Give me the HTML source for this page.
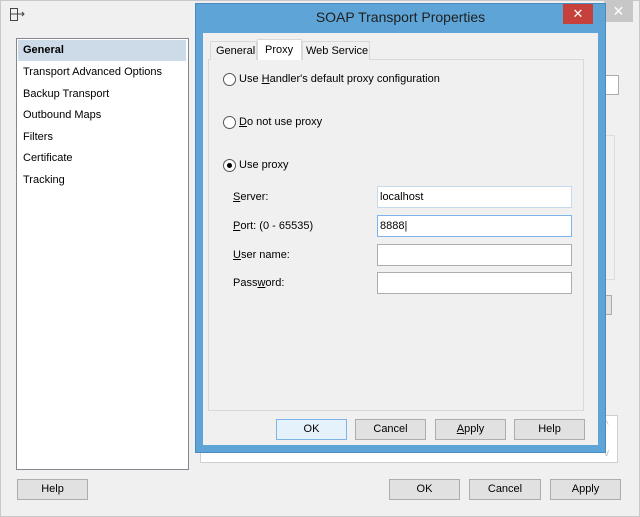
<!DOCTYPE html><html><head><style>
*{box-sizing:border-box;margin:0;padding:0}
body{width:640px;height:517px;background:#f0f0f0;font-family:"Liberation Sans",sans-serif;font-size:11px;color:#000;position:relative;overflow:hidden;white-space:nowrap}
.a{position:absolute}
.btn{position:absolute;height:21px;border:1px solid #adadad;background:#e1e1e1;text-align:center;line-height:19px;font-size:11px}
.inp{position:absolute;left:377px;width:195px;height:22px;border:1px solid #abadb3;background:#fff;padding-left:2px;line-height:20px}
.lbl{position:absolute;left:233px}
.rad{position:absolute;left:223px;width:13px;height:13px;border:1px solid #555;border-radius:50%;background:#fff}
u{text-decoration:underline}
</style></head><body>
<div class="a" style="left:0;top:0;width:640px;height:517px;border:1px solid #c8c8c8"></div>
<svg class="a" style="left:9px;top:7px" width="18" height="16"><rect x="1.5" y="1.5" width="7" height="12" fill="none" stroke="#444"/><line x1="1.5" y1="7" x2="8.5" y2="7" stroke="#444"/><line x1="9" y1="7" x2="15" y2="7" stroke="#444"/><path d="M13 5l2 2-2 2" fill="none" stroke="#444"/></svg>
<div class="a" style="left:604px;top:1px;width:29px;height:21px;background:#c7c7c7;color:#fff;text-align:center;line-height:20px;font-size:14px">✕</div>
<div class="a" style="left:16px;top:38px;width:173px;height:432px;background:#fff;border:1px solid #828790"></div>
<div class="a" style="left:18px;top:40px;width:168px;height:21px;background:#cddae7"></div>
<div class="a" style="left:23px;top:44px;font-weight:bold">General</div>
<div class="a" style="left:23px;top:66px">Transport Advanced Options</div>
<div class="a" style="left:23px;top:88px">Backup Transport</div>
<div class="a" style="left:23px;top:109px">Outbound Maps</div>
<div class="a" style="left:23px;top:131px">Filters</div>
<div class="a" style="left:23px;top:152px">Certificate</div>
<div class="a" style="left:23px;top:174px">Tracking</div>
<div class="a" style="left:596px;top:40px;width:10px;height:25px;background:#3399ff"></div>
<div class="a" style="left:598px;top:75px;width:21px;height:20px;background:#fff;border:1px solid #abadb3"></div>
<div class="a" style="left:598px;top:135px;width:17px;height:145px;border:1px solid #dcdcdc"></div>
<div class="a" style="left:598px;top:185px;width:7px;height:21px;background:#fff;border:1px solid #7eb4ea"></div>
<div class="a" style="left:598px;top:295px;width:14px;height:20px;background:#e1e1e1;border:1px solid #adadad"></div>
<div class="a" style="left:200px;top:415px;width:418px;height:48px;border:1px solid #cfcfcf;background:#fff"></div>
<div class="a" style="left:604px;top:420px;color:#bbb;font-size:10px">^</div>
<div class="a" style="left:604px;top:448px;color:#bbb;font-size:10px">v</div>
<div class="btn" style="left:17px;top:479px;width:71px">Help</div>
<div class="btn" style="left:389px;top:479px;width:71px">OK</div>
<div class="btn" style="left:469px;top:479px;width:72px">Cancel</div>
<div class="btn" style="left:550px;top:479px;width:71px">Apply</div>
<!-- dialog -->
<div class="a" style="left:195px;top:3px;width:411px;height:450px;background:#5ea4d6;border:1px solid #4a8cc0"></div>
<div class="a" style="left:195px;top:9px;width:411px;text-align:center;font-size:14px;color:#1f1f1f">SOAP Transport Properties</div>
<div class="a" style="left:563px;top:4px;width:30px;height:20px;background:#c7413c;color:#fff;text-align:center;line-height:20px;font-size:13px">✕</div>
<div class="a" style="left:203px;top:33px;width:395px;height:412px;background:#f0f0f0"></div>
<div class="a" style="left:208px;top:59px;width:376px;height:352px;border:1px solid #d9d9d9;background:#f0f0f0"></div>
<div class="a" style="left:210px;top:41px;width:47px;height:19px;border:1px solid #d9d9d9;border-bottom:none;background:#f0f0f0;padding:3px 0 0 5px">General</div>
<div class="a" style="left:302px;top:41px;width:68px;height:19px;border:1px solid #d9d9d9;border-bottom:none;background:#f0f0f0;padding:3px 0 0 3px">Web Service</div>
<div class="a" style="left:257px;top:39px;width:45px;height:21px;border:1px solid #d9d9d9;border-bottom:none;background:#fff;padding:4px 0 0 7px">Proxy</div>
<div class="rad" style="top:73px"></div><div class="lbl" style="left:239px;top:73px">Use <u>H</u>andler's default proxy configuration</div>
<div class="rad" style="top:116px"></div><div class="lbl" style="left:239px;top:116px"><u>D</u>o not use proxy</div>
<div class="rad" style="top:159px"></div><div class="a" style="left:227px;top:163px;width:5px;height:5px;border-radius:50%;background:#000"></div><div class="lbl" style="left:239px;top:159px">Use proxy</div>
<div class="lbl" style="top:191px"><u>S</u>erver:</div>
<div class="lbl" style="top:220px"><u>P</u>ort: (0 - 65535)</div>
<div class="lbl" style="top:249px"><u>U</u>ser name:</div>
<div class="lbl" style="top:277px">Pass<u>w</u>ord:</div>
<div class="inp" style="top:186px;border-color:#c5daed">localhost</div>
<div class="inp" style="top:215px;border-color:#7eb4ea">8888|</div>
<div class="inp" style="top:244px"></div>
<div class="inp" style="top:272px"></div>
<div class="btn" style="left:276px;top:419px;width:71px;border-color:#7eb4ea;background:#e5f1fb">OK</div>
<div class="btn" style="left:355px;top:419px;width:71px">Cancel</div>
<div class="btn" style="left:435px;top:419px;width:71px"><u>A</u>pply</div>
<div class="btn" style="left:514px;top:419px;width:71px">Help</div>
</body></html>
